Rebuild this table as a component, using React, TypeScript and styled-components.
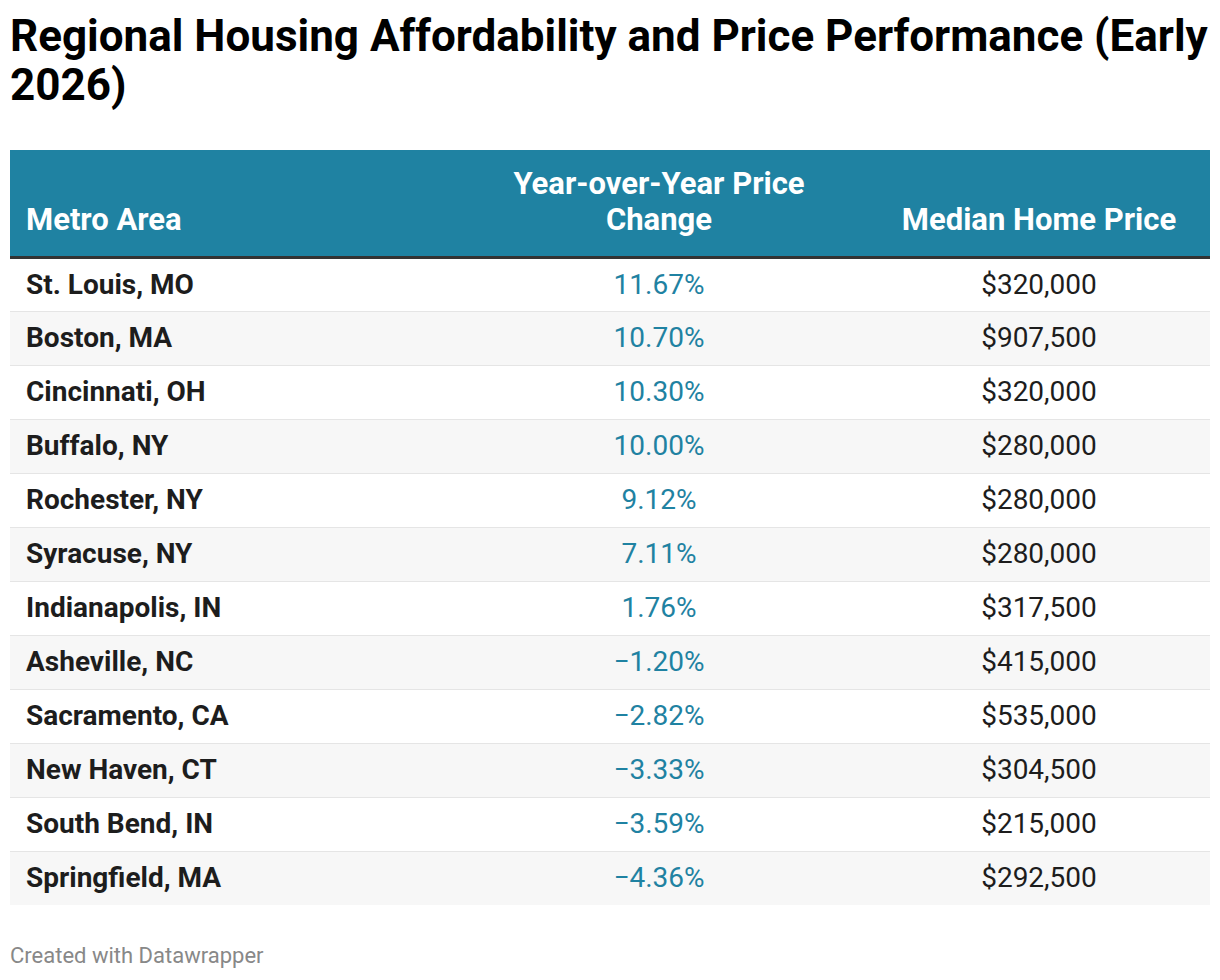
import React from "react";
import styled, { createGlobalStyle } from "styled-components";

const Global = createGlobalStyle`
  html, body { margin: 0; padding: 0; background: #fff; }
  body { font-family: Roboto, "Liberation Sans", sans-serif; color: #1d1d1d; }
`;

const Page = styled.div`
  padding: 12px 10px 0 10px;
  width: 1200px;
`;

const Title = styled.h1`
  margin: 0;
  font-size: 44px;
  line-height: 49px;
  font-weight: 700;
  color: #000;
`;

const Table = styled.table`
  margin-top: 40px;
  width: 1200px;
  border-collapse: collapse;
  table-layout: fixed;
`;

const HeadRow = styled.tr`
  background: #1f82a2;
  border-bottom: 3px solid #333;
`;

const HeadCell = styled.th<{ $align: "left" | "center" }>`
  height: 107px;
  box-sizing: border-box;
  padding: 15px 16px 18px 16px;
  text-align: ${(p) => p.$align};
  vertical-align: bottom;
  color: #fff;
  font-size: 31px;
  line-height: 36px;
  font-weight: 700;
`;

const Row = styled.tr<{ $striped: boolean }>`
  background: ${(p) => (p.$striped ? "#f7f7f7" : "#fff")};
  border-bottom: 1px solid #e5e5e5;
  &:last-child { border-bottom: none; }
`;

const Cell = styled.td<{ $align: "left" | "center"; $kind: "name" | "pct" | "price" }>`
  height: 54px;
  padding: 0 16px;
  box-sizing: border-box;
  text-align: ${(p) => p.$align};
  vertical-align: middle;
  font-size: 28px;
  line-height: 32px;
  font-weight: ${(p) => (p.$kind === "name" ? 700 : 400)};
  color: ${(p) => (p.$kind === "pct" ? "#1f82a2" : "#1d1d1d")};
`;

const Footer = styled.div`
  margin-top: 39px;
  font-size: 22px;
  color: #888;
  line-height: 24px;
`;

const rows: [string, string, string][] = [
  ["St. Louis, MO", "11.67%", "$320,000"],
  ["Boston, MA", "10.70%", "$907,500"],
  ["Cincinnati, OH", "10.30%", "$320,000"],
  ["Buffalo, NY", "10.00%", "$280,000"],
  ["Rochester, NY", "9.12%", "$280,000"],
  ["Syracuse, NY", "7.11%", "$280,000"],
  ["Indianapolis, IN", "1.76%", "$317,500"],
  ["Asheville, NC", "\u22121.20%", "$415,000"],
  ["Sacramento, CA", "\u22122.82%", "$535,000"],
  ["New Haven, CT", "\u22123.33%", "$304,500"],
  ["South Bend, IN", "\u22123.59%", "$215,000"],
  ["Springfield, MA", "\u22124.36%", "$292,500"],
];

export default function App() {
  return (
    <>
      <Global />
      <Page>
        <Title>Regional Housing Affordability and Price Performance (Early 2026)</Title>
        <Table>
          <colgroup>
            <col style={{ width: 440 }} />
            <col style={{ width: 418 }} />
            <col style={{ width: 342 }} />
          </colgroup>
          <thead>
            <HeadRow>
              <HeadCell $align="left">Metro Area</HeadCell>
              <HeadCell $align="center">Year-over-Year Price Change</HeadCell>
              <HeadCell $align="center">Median Home Price</HeadCell>
            </HeadRow>
          </thead>
          <tbody>
            {rows.map((r, i) => (
              <Row key={r[0]} $striped={i % 2 === 1}>
                <Cell $align="left" $kind="name">{r[0]}</Cell>
                <Cell $align="center" $kind="pct">{r[1]}</Cell>
                <Cell $align="center" $kind="price">{r[2]}</Cell>
              </Row>
            ))}
          </tbody>
        </Table>
        <Footer>Created with Datawrapper</Footer>
      </Page>
    </>
  );
}
